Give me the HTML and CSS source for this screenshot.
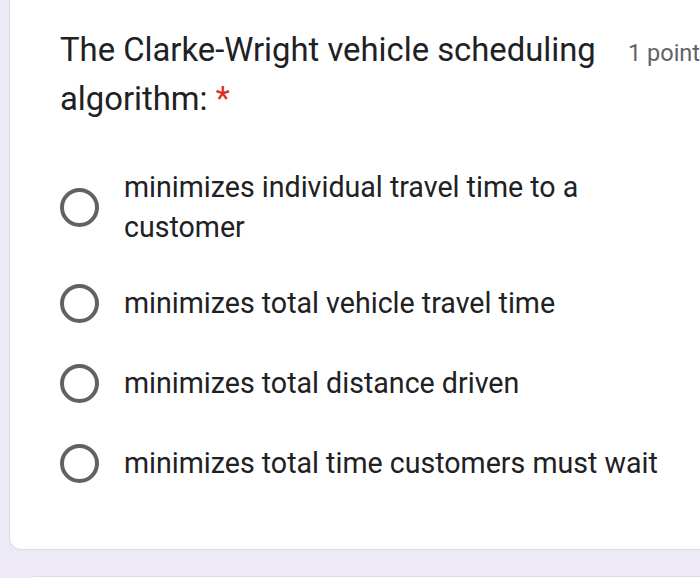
FILE: index.html
```html
<!DOCTYPE html>
<html>
<head>
<meta charset="utf-8">
<link rel="stylesheet" href="styles.css">
</head>
<body>
<div class="page">
  <div class="card">
    <div class="header">
      <div class="title">The Clarke-Wright vehicle scheduling algorithm: <span class="req">*</span></div>
      <div class="points">1 point</div>
    </div>
    <div class="options">
      <div class="option first"><span class="radio"></span><span class="label">minimizes individual travel time to a customer</span></div>
      <div class="option"><span class="radio"></span><span class="label">minimizes total vehicle travel time</span></div>
      <div class="option"><span class="radio"></span><span class="label">minimizes total distance driven</span></div>
      <div class="option"><span class="radio"></span><span class="label">minimizes total time customers must wait</span></div>
    </div>
  </div>
  <div class="next"></div>
</div>
</body>
</html>
```
FILE: styles.css
```css
html, body {
  margin: 0;
  padding: 0;
  background: #ede9f6;
  font-family: Roboto, "Liberation Sans", sans-serif;
  overflow: hidden;
}
.page {
  width: 700px;
  height: 578px;
  padding-left: 9px;
  box-sizing: border-box;
}
.card {
  background: #fff;
  border: 1px solid #dadce0;
  border-top: none;
  border-right: none;
  border-radius: 0 0 0 12px;
  height: 550px;
  box-sizing: border-box;
  padding: 26px 0 0 50px;
  width: 720px;
}
.header {
  display: flex;
  align-items: flex-start;
}
.title {
  width: 545px;
  font-size: 32.8px;
  line-height: 49px;
  color: #202124;
}
.req {
  color: #d93025;
}
.points {
  font-size: 23.5px;
  color: #5f6368;
  margin-top: 13px;
  margin-left: 23px;
  white-space: nowrap;
}
.options {
  margin-top: 43px;
  display: flex;
  flex-direction: column;
  gap: 40px;
}
.option {
  display: flex;
  align-items: center;
}
.option.first {
  margin-bottom: -4px;
}
.radio {
  width: 31px;
  height: 31px;
  border: 4px solid #5f6368;
  border-radius: 50%;
  flex: none;
  margin-right: 25px;
}
.label {
  width: 545px;
  font-size: 28.6px;
  line-height: 40px;
  color: #202124;
}
.next {
  margin-top: 26px;
  height: 10px;
  background: #fff;
  border-top: 1px solid #dadce0;
  margin-left: 24px;
}
```
